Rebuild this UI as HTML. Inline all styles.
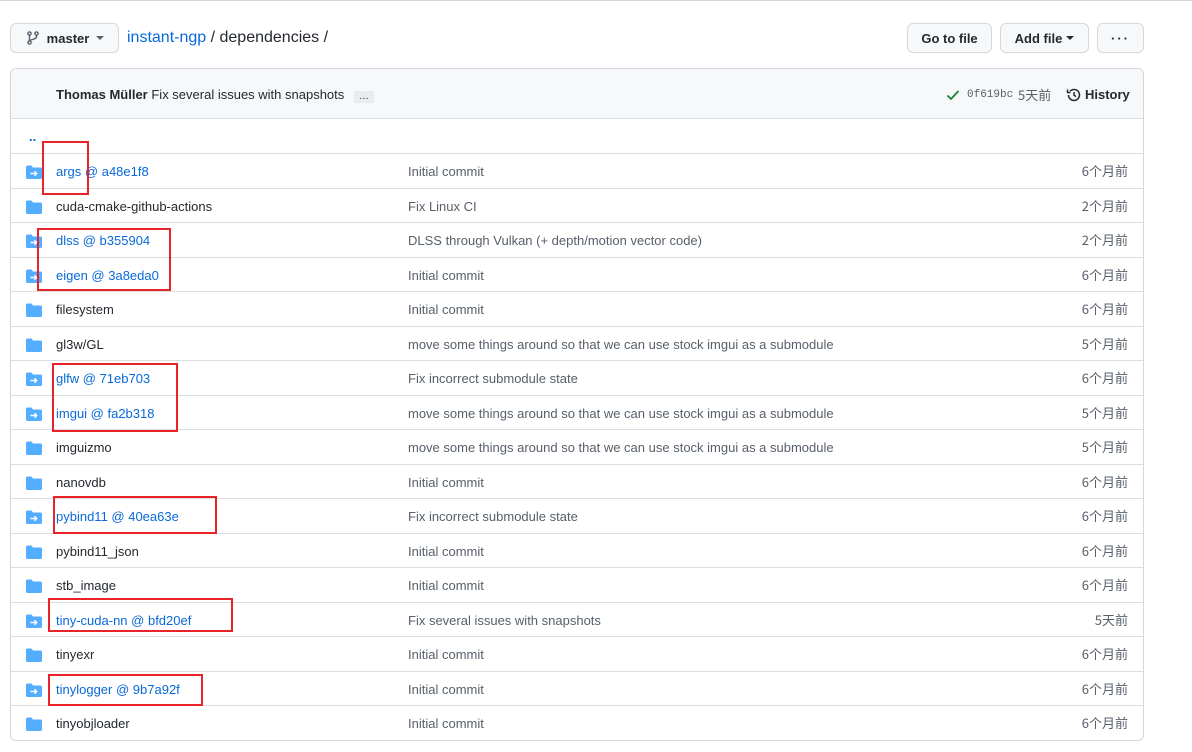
<!DOCTYPE html>
<html><head><meta charset="utf-8"><style>
*{box-sizing:border-box;margin:0;padding:0}
body{width:1192px;height:752px;background:#fff;font-family:"Liberation Sans","Noto Sans CJK SC",sans-serif;font-size:13px;color:#24292f;position:relative;overflow:hidden}
.a{position:absolute}
.btn{position:absolute;top:23px;height:30px;border:1px solid #d5d8dc;border-radius:6px;background:#f6f8fa;font-size:13px;font-weight:bold;color:#24292f;display:flex;align-items:center;justify-content:center}
.box{position:absolute;left:10px;top:68px;width:1134px;height:673px;border:1px solid #d0d7de;border-radius:6px;overflow:hidden}
.row{position:absolute;left:0;width:1132px;height:34.5px;border-top:1px solid #d8dee4}
.row .n{position:absolute;left:45px;top:10px;white-space:nowrap}
.row .m{position:absolute;left:397px;top:10px;color:#57606a;white-space:nowrap}
.row .t{position:absolute;right:15px;top:8px;line-height:17px;color:#57606a;white-space:nowrap;font-family:"Noto Sans CJK SC",sans-serif}
.row svg{position:absolute;left:15px;top:11px}
.lnk{color:#0969da}
.red{position:absolute;border:2px solid #e8232a}
</style></head><body>
<div class="a" style="left:0;top:0;width:1192px;height:1px;background:#d0d7de"></div>
<div class="btn" style="left:10px;width:109px">
<svg width="16" height="16" viewBox="0 0 16 16" style="margin-right:6px"><circle cx="4.5" cy="3.5" r="1.6" fill="none" stroke="#57606a" stroke-width="1.4"/><circle cx="4.5" cy="12.5" r="1.6" fill="none" stroke="#57606a" stroke-width="1.4"/><circle cx="11.5" cy="3.5" r="1.6" fill="none" stroke="#57606a" stroke-width="1.4"/><path d="M4.5 5v6M11.5 5v1.5c0 2-2 2.5-4 3l-3 1" fill="none" stroke="#57606a" stroke-width="1.4"/></svg>
<span>master</span><span style="margin-left:7px;border-left:4px solid transparent;border-right:4px solid transparent;border-top:4px solid #57606a"></span></div>
<div class="a" style="left:127px;top:29px;font-size:16px"><span class="lnk">instant-ngp</span> / dependencies /</div>
<div class="btn" style="left:907px;width:85px">Go to file</div>
<div class="btn" style="left:1000px;width:89px">Add file<span style="margin-left:4px;border-left:4px solid transparent;border-right:4px solid transparent;border-top:4px solid #24292f"></span></div>
<div class="btn" style="left:1097px;width:47px;letter-spacing:2px">···</div>
<div class="box">
<div class="a" style="left:0;top:0;width:1132px;height:50px;background:#f6f8fa;border-bottom:1px solid #d8dee4"></div>
<div class="a" style="left:45px;top:18px;white-space:nowrap"><b>Thomas Müller</b> Fix several issues with snapshots <span style="display:inline-block;background:#e8ebef;border-radius:2px;padding:0 5px;font-size:10px;line-height:12px;margin-left:6px">…</span></div>
<svg class="a" style="left:935px;top:20px" width="14" height="12" viewBox="0 0 14 12"><path d="M1.5 6.5l3.5 3.5 7.5-8" fill="none" stroke="#1a7f37" stroke-width="1.8"/></svg>
<div class="a" style="left:956px;top:20px;font-family:'Liberation Mono',monospace;font-size:11px;color:#57606a">0f619bc</div>
<div class="a" style="left:1007px;top:17px;line-height:17px;color:#57606a;font-family:'Noto Sans CJK SC',sans-serif">5天前</div>
<svg class="a" style="left:1055px;top:18px" width="16" height="16" viewBox="0 0 16 16"><path d="M2.5 8a5.5 5.5 0 1 0 1.6-3.9" fill="none" stroke="#24292f" stroke-width="1.5"/><path d="M1.5 2.5v3h3" fill="none" stroke="#24292f" stroke-width="1.5"/><path d="M8 5v3.2l2 1.3" fill="none" stroke="#24292f" stroke-width="1.5"/></svg>
<div class="a" style="left:1074px;top:18px;font-weight:bold">History</div>
<div class="a lnk" style="left:18px;top:60px;font-weight:bold">..</div>
<div id="rows"></div>
</div>
<script>
var d=[["args @ a48e1f8",1,"Initial commit","6个月前"],["cuda-cmake-github-actions",0,"Fix Linux CI","2个月前"],["dlss @ b355904",1,"DLSS through Vulkan (+ depth/motion vector code)","2个月前"],["eigen @ 3a8eda0",1,"Initial commit","6个月前"],["filesystem",0,"Initial commit","6个月前"],["gl3w/GL",0,"move some things around so that we can use stock imgui as a submodule","5个月前"],["glfw @ 71eb703",1,"Fix incorrect submodule state","6个月前"],["imgui @ fa2b318",1,"move some things around so that we can use stock imgui as a submodule","5个月前"],["imguizmo",0,"move some things around so that we can use stock imgui as a submodule","5个月前"],["nanovdb",0,"Initial commit","6个月前"],["pybind11 @ 40ea63e",1,"Fix incorrect submodule state","6个月前"],["pybind11_json",0,"Initial commit","6个月前"],["stb_image",0,"Initial commit","6个月前"],["tiny-cuda-nn @ bfd20ef",1,"Fix several issues with snapshots","5天前"],["tinyexr",0,"Initial commit","6个月前"],["tinylogger @ 9b7a92f",1,"Initial commit","6个月前"],["tinyobjloader",0,"Initial commit","6个月前"]];
var h="";
d.forEach(function(r,i){var top=84+34.5*i;
var ic='<svg width="16" height="14" viewBox="0 0 16 14"><path d="M0 2a1.5 1.5 0 0 1 1.5-1.5h4l1.5 2h7.5A1.5 1.5 0 0 1 16 4v8.5a1.5 1.5 0 0 1-1.5 1.5h-13A1.5 1.5 0 0 1 0 12.5z" fill="#54aeff"/>'+(r[1]?'<path d="M4.5 8.5h6M8.5 6.3l2.2 2.2-2.2 2.2" fill="none" stroke="#fff" stroke-width="1.4"/>':'')+'</svg>';
h+='<div class="row" style="top:'+top+'px">'+ic+'<span class="n'+(r[1]?' lnk':'')+'">'+r[0]+'</span><span class="m">'+r[2]+'</span><span class="t">'+r[3]+'</span></div>';});
document.getElementById("rows").innerHTML=h;
</script>
<div class="red" style="left:42px;top:141px;width:47px;height:54px"></div>
<div class="red" style="left:37px;top:228px;width:134px;height:63px"></div>
<div class="red" style="left:52px;top:363px;width:126px;height:69px"></div>
<div class="red" style="left:53px;top:496px;width:164px;height:38px"></div>
<div class="red" style="left:48px;top:598px;width:185px;height:34px"></div>
<div class="red" style="left:48px;top:674px;width:155px;height:32px"></div>
</body></html>
